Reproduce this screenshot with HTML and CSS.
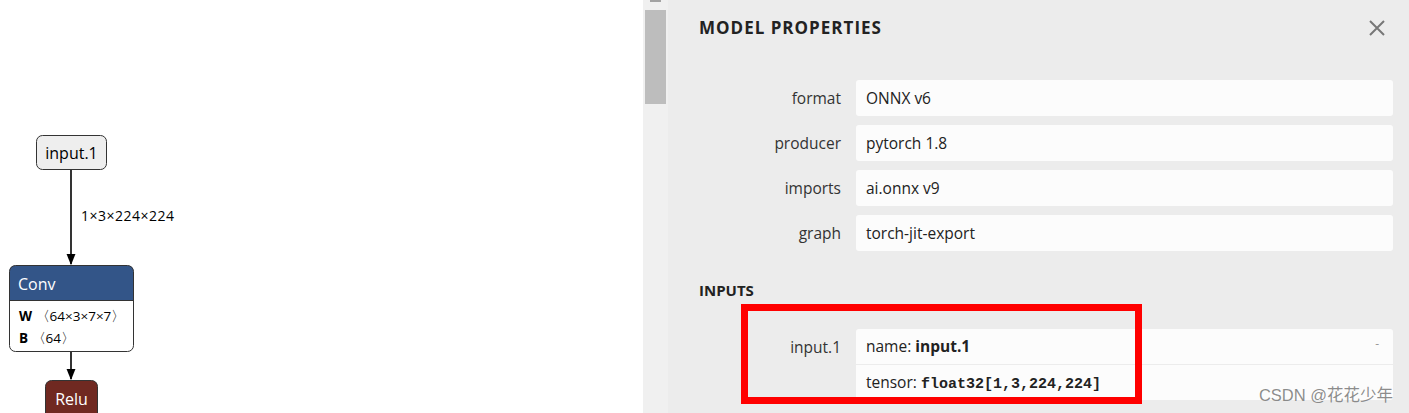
FILE: index.html
```html
<!DOCTYPE html>
<html>
<head>
<meta charset="utf-8">
<link rel="stylesheet" href="styles.css">
</head>
<body>
<div class="app">
  <div class="canvas">
    <svg class="graph" width="643" height="413" viewBox="0 0 643 413" xmlns="http://www.w3.org/2000/svg">
      <defs>
        <marker id="arrow" viewBox="0 0 10 10" refX="9" refY="5" markerWidth="7" markerHeight="7" orient="auto">
          <path d="M0 1 L10 5 L0 9 z" fill="#000"/>
        </marker>
      </defs>
      <rect class="node-input" x="36.5" y="135.5" width="70" height="34" rx="6"/>
      <text class="node-text" x="71.5" y="159" text-anchor="middle">input.1</text>
      <path class="edge" d="M71 170 L71 264" marker-end="url(#arrow)"/>
      <text class="edge-label" x="81" y="221">1×3×224×224</text>
      <rect class="node-body" x="9.5" y="265.5" width="124" height="86" rx="6"/>
      <path class="node-layer" d="M9.5 300 L9.5 271.5 Q9.5 265.5 15.5 265.5 L127.5 265.5 Q133.5 265.5 133.5 271.5 L133.5 300 Z"/>
      <line class="node-sep" x1="9.5" y1="300.5" x2="133.5" y2="300.5"/>
      <rect class="node-outline" x="9.5" y="265.5" width="124" height="86" rx="6"/>
      <text class="node-title" x="18" y="290">Conv</text>
      <text class="attr" x="19" y="321"><tspan class="attr-name">W</tspan> 〈64×3×7×7〉</text>
      <text class="attr" x="19" y="343"><tspan class="attr-name">B</tspan> 〈64〉</text>
      <path class="edge" d="M71 352 L71 379" marker-end="url(#arrow)"/>
      <rect class="node-act" x="45.5" y="380.5" width="52" height="40" rx="6"/>
      <text class="node-title" x="71.5" y="405" text-anchor="middle">Relu</text>
    </svg>
  </div>
  <div class="scrollbar">
    <div class="scroll-arrow"></div>
    <div class="scroll-thumb"></div>
  </div>
  <aside class="panel">
    <header class="panel-header">
      <h1 class="panel-title">MODEL PROPERTIES</h1>
      <button class="close" aria-label="Close">
        <svg width="16" height="16" viewBox="0 0 16 16"><path d="M1 1 L15 15 M15 1 L1 15" stroke="#777" stroke-width="2" fill="none"/></svg>
      </button>
    </header>
    <div class="props">
      <div class="prop-name">format</div><div class="prop-value">ONNX v6</div>
      <div class="prop-name">producer</div><div class="prop-value">pytorch 1.8</div>
      <div class="prop-name">imports</div><div class="prop-value">ai.onnx v9</div>
      <div class="prop-name">graph</div><div class="prop-value">torch-jit-export</div>
    </div>
    <h2 class="section-title">INPUTS</h2>
    <div class="props inputs">
      <div class="prop-name top">input.1</div>
      <div class="prop-box">
        <div class="box-row">name: <b>input.1</b><span class="expander">-</span></div>
        <div class="box-row">tensor: <code>float32[1,3,224,224]</code></div>
      </div>
    </div>
    <div class="highlight"></div>
    <div class="watermark">CSDN @花花少年</div>
  </aside>
</div>
</body>
</html>
```
FILE: styles.css
```css
* { box-sizing: border-box; }
html, body { margin: 0; padding: 0; }
body {
  width: 1409px;
  height: 413px;
  overflow: hidden;
  font-family: "Open Sans", "Noto Sans CJK SC", sans-serif;
  background: #fff;
}
.app {
  display: flex;
  height: 413px;
}
.canvas {
  flex: 0 0 643px;
  background: #fff;
}
.graph { display: block; }
.node-input { fill: #eee; stroke: #333; stroke-width: 1; }
.node-body { fill: #fff; }
.node-layer { fill: rgb(51, 85, 136); }
.node-act { fill: rgb(112, 41, 33); stroke: #333; stroke-width: 1; }
.node-outline { fill: none; stroke: #333; stroke-width: 1; }
.node-sep { stroke: #333; stroke-width: 1; }
.edge { stroke: #000; stroke-width: 1.6; fill: none; }
.node-text { font-size: 16px; fill: #000; font-family: "Open Sans", sans-serif; }
.node-title { font-size: 16px; fill: #fff; font-family: "Open Sans", sans-serif; }
.edge-label { font-size: 14px; letter-spacing: 0.5px; fill: #000; font-family: "Open Sans", sans-serif; }
.attr { font-size: 13.5px; fill: #000; font-family: "Open Sans", sans-serif; }
.attr-name { font-weight: 700; }

.scrollbar {
  flex: 0 0 25px;
  background: #f0f0f0;
  display: flex;
  flex-direction: column;
  align-items: center;
}
.scroll-arrow {
  width: 11px;
  height: 2px;
  background: #a3a3a3;
}
.scroll-thumb {
  width: 21px;
  height: 94px;
  margin-top: 8px;
  background: #bdbdbd;
}

.panel {
  flex: 1;
  position: relative;
  background: #ececec;
  padding: 0 16px 0 31px;
  color: #222;
}
.panel-header {
  display: flex;
  align-items: center;
  justify-content: space-between;
  height: 55px;
}
.panel-title {
  margin: 0;
  font-size: 17px;
  font-weight: 700;
  letter-spacing: 1px;
  color: #222;
}
.close {
  border: 0;
  background: none;
  padding: 0;
  margin-right: 8px;
  width: 16px;
  height: 16px;
  display: flex;
}
.props {
  display: grid;
  grid-template-columns: 142px 1fr;
  column-gap: 15px;
  row-gap: 9px;
  margin-top: 25px;
}
.prop-name {
  text-align: right;
  font-size: 15.5px;
  color: #333;
  line-height: 36px;
}
.prop-value {
  background: #fcfcfc;
  border-radius: 3px;
  height: 36px;
  line-height: 36px;
  padding: 0 10px;
  font-size: 15.5px;
  color: #222;
}
.section-title {
  margin: 30px 0 0 0;
  font-size: 15px;
  font-weight: 700;
  color: #222;
  line-height: 18px;
}
.inputs { margin-top: 30px; }
.prop-name.top { line-height: 36px; }
.prop-box {
  background: #fcfcfc;
  border-radius: 3px;
  height: 71px;
}
.box-row {
  position: relative;
  height: 35px;
  line-height: 35px;
  padding: 0 10px;
  font-size: 15.5px;
  color: #222;
}
.box-row + .box-row { border-top: 1px solid #ececec; }
.box-row b { font-weight: 700; }
.box-row code {
  font-family: "Liberation Mono", monospace;
  font-weight: 700;
  font-size: 15px;
}
.expander {
  position: absolute;
  right: 14px;
  top: -3px;
  color: #999;
  font-size: 12px;
}
.highlight {
  position: absolute;
  left: 73px;
  top: 304px;
  width: 401px;
  height: 100px;
  border: 7px solid #ff0000;
}
.watermark {
  position: absolute;
  right: 16px;
  top: 382px;
  font-family: "Liberation Sans", "Noto Sans CJK SC", sans-serif;
  font-size: 16.5px;
  color: rgba(120, 120, 120, 0.85);
}
```
